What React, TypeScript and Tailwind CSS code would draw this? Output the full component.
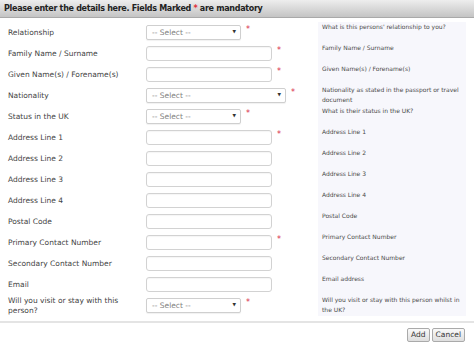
import React from 'react';

type Row = {
  label: string;
  kind: 'select' | 'text';
  width?: number;
  required?: boolean;
  help: string;
};

const rows: Row[] = [
  { label: 'Relationship', kind: 'select', width: 95, required: true, help: "What is this persons' relationship to you?" },
  { label: 'Family Name / Surname', kind: 'text', required: true, help: 'Family Name / Surname' },
  { label: 'Given Name(s) / Forename(s)', kind: 'text', required: true, help: 'Given Name(s) / Forename(s)' },
  { label: 'Nationality', kind: 'select', width: 140, required: true, help: 'Nationality as stated in the passport or travel document' },
  { label: 'Status in the UK', kind: 'select', width: 95, required: true, help: 'What is their status in the UK?' },
  { label: 'Address Line 1', kind: 'text', required: true, help: 'Address Line 1' },
  { label: 'Address Line 2', kind: 'text', help: 'Address Line 2' },
  { label: 'Address Line 3', kind: 'text', help: 'Address Line 3' },
  { label: 'Address Line 4', kind: 'text', help: 'Address Line 4' },
  { label: 'Postal Code', kind: 'text', help: 'Postal Code' },
  { label: 'Primary Contact Number', kind: 'text', required: true, help: 'Primary Contact Number' },
  { label: 'Secondary Contact Number', kind: 'text', help: 'Secondary Contact Number' },
  { label: 'Email', kind: 'text', help: 'Email address' },
  { label: 'Will you visit or stay with this person?', kind: 'select', width: 95, required: true, help: 'Will you visit or stay with this person whilst in the UK?' },
];

const Star = () => (
  <span className="text-[#d9304a] text-[8px] leading-none -translate-y-[3px] ml-[5px]">*</span>
);

const SelectBox = ({ width }: { width: number }) => (
  <div
    className="h-[15px] flex items-center justify-between border border-[#cfcfcf] rounded-[2px] bg-white shadow-[0_1px_1px_rgba(0,0,0,0.06)] pl-[5px] pr-[4px]"
    style={{ width }}
  >
    <span className="text-[7.5px] text-[#808080]">-- Select --</span>
    <span className="text-[4.5px] text-[#333] leading-none">▼</span>
  </div>
);

export default function App() {
  return (
    <div className="w-[474px] h-[347px] bg-white overflow-hidden" style={{ fontFamily: '"DejaVu Sans", Verdana, sans-serif' }}>
      <div className="h-[18px] flex items-center px-[4px] bg-gradient-to-b from-[#eeeeee] to-[#c4c4c4] border-b border-[#a9a9a9]">
        <span className="text-[8px] font-bold text-[#222] tracking-[-0.3px]">
          Please enter the details here. Fields Marked <span className="text-[#e0303a]">*</span> are mandatory
        </span>
      </div>

      <div className="mt-[4px] ml-[8px] grid grid-cols-[138px_172px_148px]">
        {rows.map((r) => (
          <React.Fragment key={r.label}>
            <div className="h-[21px] flex items-center text-[7.5px] leading-[10px] text-[#444] pr-[4px]">{r.label}</div>
            <div className="h-[21px] flex items-center">
              {r.kind === 'select' ? (
                <SelectBox width={r.width ?? 95} />
              ) : (
                <div className="w-[126px] h-[15px] border border-[#d2d2d2] rounded-[3px] bg-white shadow-[inset_0_1px_1px_rgba(0,0,0,0.04)]" />
              )}
              {r.required && <Star />}
            </div>
            <div className="h-[21px] bg-[#f7f7fc] pl-[4px] pr-[4px] text-[6px] leading-[10px] text-[#4a4a4a] overflow-visible">
              {r.help}
            </div>
          </React.Fragment>
        ))}
      </div>

      <div className="mt-[5px] border-t-2 border-[#e4e4e4]" />
      <div className="flex justify-end gap-[2px] pr-[9px] pt-[5px]">
        <button className="h-[14px] px-[3px] text-[7.5px] leading-none text-[#333] border border-[#aaa] rounded-[2px] bg-gradient-to-b from-[#fafafa] to-[#dedede]">
          Add
        </button>
        <button className="h-[14px] px-[3px] text-[7.5px] leading-none text-[#333] border border-[#aaa] rounded-[2px] bg-gradient-to-b from-[#fafafa] to-[#dedede]">
          Cancel
        </button>
      </div>
    </div>
  );
}
